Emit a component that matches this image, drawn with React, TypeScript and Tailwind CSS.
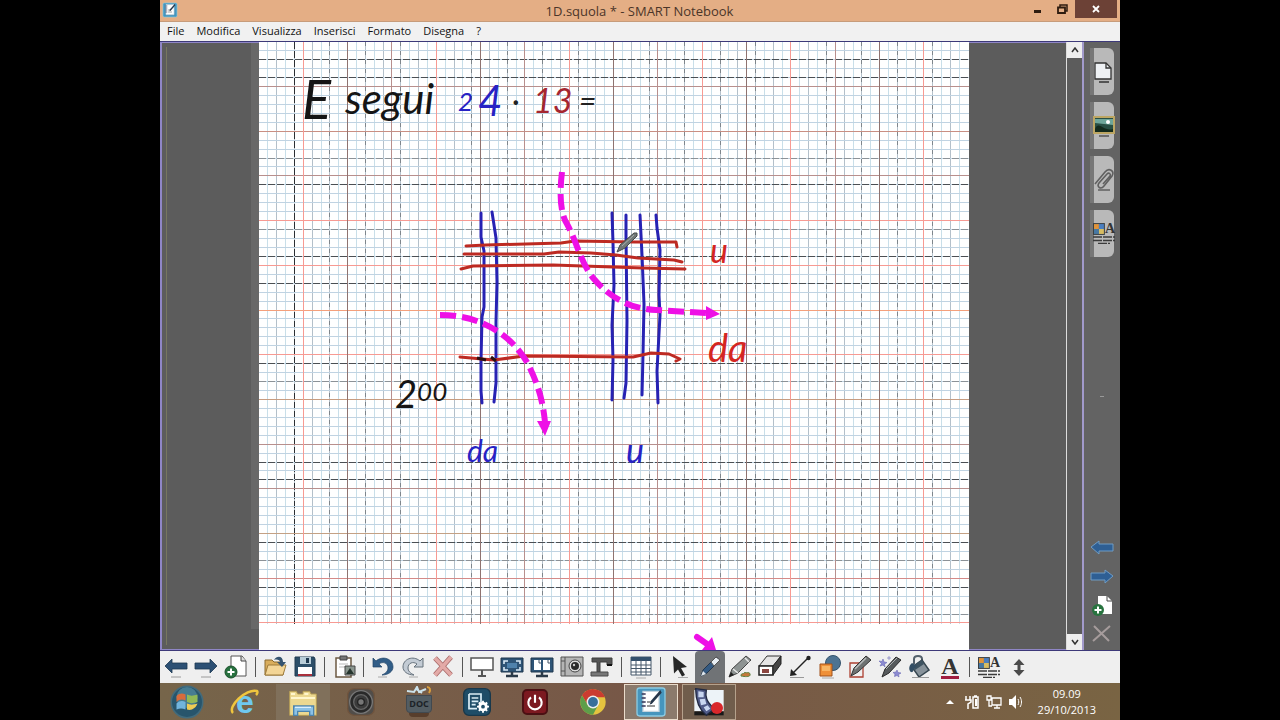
import React from 'react';

type IconProps = { className?: string };

const Svg: React.FC<{ size?: string; children: React.ReactNode }> = ({ size = 'size-6', children }) => (
  <svg viewBox="0 0 24 24" fill="none" className={size} aria-hidden="true">{children}</svg>
);

/* Toolbar icons */
const ArrowLeft = () => (
  <Svg>
    <path d="M1 11 8 4v4h15v6H8v4z" fill="#2c5074" stroke="#1d3852" strokeWidth=".8" />
    <path d="M7 22h10" stroke="#9a9a9a" />
  </Svg>
);
const ArrowRight = () => (
  <Svg>
    <path d="M23 11 16 4v4H1v6h15v4z" fill="#2c5074" stroke="#1d3852" strokeWidth=".8" />
    <path d="M7 22h10" stroke="#9a9a9a" />
  </Svg>
);
const PageAdd = () => (
  <Svg>
    <path d="M7 1h11l4 5v15H7z" fill="#fff" stroke="#555" />
    <path d="M17 1v5h5" fill="#ddd" stroke="#444" />
    <circle cx="7" cy="17" r="6" fill="#27713f" stroke="#195029" />
    <path d="M3.500 17h7M7 13.500v7" stroke="#fff" strokeWidth="2" />
  </Svg>
);
const FolderOpen = () => (
  <Svg>
    <path d="M2 20V5h7l2 2h9v13z" fill="#d9ad5c" stroke="#8b6a2e" />
    <path d="m2 20 3-10h18l-3 10z" fill="#f3d596" stroke="#9d7a3a" />
    <path d="M11 5c3-5 9-4 9 2h3l-4 5-5-5h3c0-2-3-3-6-2z" fill="#34536f" />
  </Svg>
);
const Save = () => (
  <Svg>
    <path d="M2 2h19l1 2v17H2z" fill="#2c4e68" stroke="#203a50" />
    <path d="M7 2h11v7H7z" fill="#b9cdd8" />
    <path d="M13 3h3v5h-3z" fill="#203a50" />
    <path d="M5 12h14v9H5z" fill="#fff" />
    <path d="M5 19h14v2H5z" fill="#a9303c" />
  </Svg>
);
const Paste = () => (
  <Svg>
    <path d="M4 3h15v19H4z" fill="#fff" stroke="#6c5a43" strokeWidth="1.500" />
    <path d="M8 1h7v4H8z" fill="#777" stroke="#444" />
    <path d="M7 9h9M7 12h9" stroke="#bbb" />
    <path d="M13 11h10v9H13z" fill="#8b968f" stroke="#444" />
    <path d="m14 19 4-6 4 6z" fill="#26352e" />
  </Svg>
);
const Undo = () => (
  <Svg>
    <path d="M2 3v9h9L8 9c4-3 9-1 9 4 0 3-2 5-6 7 7 0 11-4 11-8C22 4 12 0 5 6z" fill="#315d87" stroke="#1f4265" strokeWidth=".7" />
    <path d="M7 22h9" stroke="#aaa" />
  </Svg>
);
const Redo = () => (
  <Svg>
    <path d="M22 3v9h-9l3-3c-4-3-9-1-9 4 0 3 2 5 6 7-7 0-11-4-11-8C2 4 12 0 19 6z" fill="#c3cbd4" stroke="#64707b" />
    <path d="M8 22h9" stroke="#aaa" />
  </Svg>
);
const Delete = () => (
  <Svg>
    <path d="m4 3 16 17M20 2 4 20" stroke="#a96a69" strokeWidth="5" />
    <path d="m4 3 16 17M20 2 4 20" stroke="#e3aaa7" strokeWidth="3.400" />
  </Svg>
);
const Screen = () => (
  <Svg>
    <path d="M1 3h22v12H1z" fill="#fff" stroke="#555" strokeWidth="1.500" />
    <path d="M12 15v5m-4 1h8" stroke="#555" strokeWidth="2" />
  </Svg>
);
const FullScreen = () => (
  <Svg>
    <path d="M1 3h22v14H1z" fill="#2e5476" stroke="#1f364c" />
    <path d="M4 9V6h4M16 6h4v3M20 12v3h-4M8 15H4v-3" stroke="#dcebf7" strokeWidth="1.600" />
    <path d="M7 8h10v5H7z" fill="#4f82ac" />
    <path d="M12 17v3m-6 1h12" stroke="#2b3a48" strokeWidth="2.500" />
  </Svg>
);
const DualPage = () => (
  <Svg>
    <path d="M1 3h22v14H1z" fill="#2e5476" stroke="#1f364c" />
    <path d="M4 5h7v10H4zM13 5h7v10h-7z" fill="#fff" />
    <path d="M9 5v3h2M18 5v3h2" stroke="#456" />
    <path d="M12 17v3m-6 1h12" stroke="#2b3a48" strokeWidth="2.500" />
  </Svg>
);
const Camera = () => (
  <Svg>
    <path d="M1 2h22v19H1z" fill="#b5b5b5" stroke="#555" />
    <path d="M5 2v19M1 6h4M1 16h4" stroke="#555" />
    <circle cx="15" cy="11" r="6" fill="#ddd" stroke="#444" />
    <circle cx="15" cy="11" r="4" fill="#2b2b2b" />
    <circle cx="14" cy="10" r="1.200" fill="#ccc" />
  </Svg>
);
const DocCamera = () => (
  <Svg>
    <path d="M2 3h20v7h-5V7h-7v10H7V7H2z" fill="#555" stroke="#3e3e3e" />
    <path d="M1 17h17v4H1z" fill="#777" stroke="#4a4a4a" />
    <path d="M17 10h5" stroke="#111" strokeWidth="2" />
  </Svg>
);
const TableIcon = () => (
  <Svg>
    <path d="M2 2h20v18H2z" fill="#fff" stroke="#46586a" />
    <path d="M2 2h20v4H2z" fill="#34506c" />
    <path d="M2 10h20M2 13.500h20M2 17h20M7 5v15M12 5v15M17 5v15" stroke="#46586a" />
    <path d="M7 23h10" stroke="#aaa" />
  </Svg>
);
const Pointer = () => (
  <Svg>
    <path d="m5 1 14 11-6 1 4 7-3 1.500-4-7-4 4z" fill="#262626" />
    <path d="M10 22.500h10" stroke="#aaa" />
  </Svg>
);
const Pen = () => (
  <Svg>
    <path d="m3 21 2-6L18 2l4 3L9 18z" fill="#345a82" stroke="#26374a" />
    <path d="m13 7 5-5 4 3-6 6z" fill="#e8eef3" stroke="#555" />
    <path d="m3 21 2-5 3 3z" fill="#dfe6ec" />
  </Svg>
);
const CreativePen = () => (
  <Svg>
    <path d="m1 22 3-8L18 1l5 4L10 18z" fill="#8d9392" stroke="#444" />
    <path d="m5 14 5 4M17 3l4 4" stroke="#e8e8e8" strokeWidth="1.500" />
    <path d="m1 22 2-5 3 3z" fill="#222" />
    <path d="M13 21c0-4 3-1 4-4 1 2 4-1 5 2 1 3-4 3-9 2z" fill="#c4783a" stroke="#5d8240" />
  </Svg>
);
const Eraser = () => (
  <Svg>
    <path d="M1 11 9 1h14l-8 10z" fill="#e5e5e5" stroke="#333" />
    <path d="M1 11h14v9H1z" fill="#fff" stroke="#222" strokeWidth="1.500" />
    <path d="m15 11 8-10v8l-8 11z" fill="#454545" stroke="#222" />
    <path d="M4 14h7v4H4z" fill="#8b4540" />
  </Svg>
);
const LineIcon = () => (
  <Svg>
    <path d="M4 19 20 3" stroke="#222" strokeWidth="1.500" />
    <path d="m2 21 1-7 6 6z" fill="#222" />
    <circle cx="20.500" cy="3" r="2.200" fill="#222" />
    <path d="M2 22.500h14" stroke="#999" />
  </Svg>
);
const Shapes = () => (
  <Svg>
    <circle cx="15" cy="8" r="7.500" fill="#4d7392" stroke="#34536d" />
    <path d="M2 9h12v12H2z" fill="#ef9038" stroke="#a0501a" />
    <path d="M4 11h8v5H4z" fill="#f8b564" />
    <path d="M4 23h12" stroke="#aaa" />
  </Svg>
);
const ShapePen = () => (
  <Svg>
    <path d="M2 8h13v14H2z" stroke="#ad4032" strokeWidth="1.300" />
    <path d="m3 21 3-8L18 1l5 4L10 17z" fill="#6d7171" stroke="#343434" />
    <path d="m7 14 11-11" stroke="#b7bbbb" strokeWidth="1.500" />
  </Svg>
);
const MagicPen = () => (
  <Svg>
    <path d="m4 22 3-8L18 2l5 3L11 18z" fill="#565a5c" stroke="#2b2b2b" />
    <path d="m8 14 11-11" stroke="#adb0b2" />
    <path d="m5 4 1 3 3 .500-2.500 1.500.500 3-2-2-3 1 1.500-2.500L1 6l3 .500zM11 1v4M9 3h4M19 15l1 2.500 3 .500-2.500 1.500L21 22l-2-1.500-2.500 1 .500-2.500-2-1.500 3-.500z" fill="#8c8bd2" stroke="#6968b5" strokeWidth=".6" />
  </Svg>
);
const Fill = () => (
  <Svg>
    <path d="M6 9V4c0-4 8-4 8 0v5" stroke="#54616c" strokeWidth="2" />
    <path d="m4 12 10-7 7 10-10 7z" fill="#87929a" stroke="#364650" strokeWidth="1.500" />
    <path d="m5 11 9-6 2 4-9 6z" fill="#3e5361" />
    <path d="M4 8c-4 3-3 8-1 9 3 1 2-4 6-6z" fill="#334e64" />
    <path d="M4 22.500h17" stroke="#999" />
  </Svg>
);
const Sizer = () => (
  <Svg>
    <path d="M12 4 6.500 10h4v5h-4L12 21l5.500-6h-4v-5h4z" fill="#4b4b4b" />
  </Svg>
);

// Text style icons keep a real letter next to the drawn parts
const FontIcon = () => (
  <span className="flex w-[18px] flex-col items-center border-b-[3px] border-[#a01d40] font-['Liberation_Serif',serif] text-2xl leading-5 font-bold text-[#343434]">A</span>
);
const TextStyle = () => (
  <span className="flex w-[22px] flex-col">
    <span className="flex items-center font-['Liberation_Serif',serif] text-sm leading-3 font-bold text-[#333]">
      <svg viewBox="0 0 12 12" className="size-3" aria-hidden="true">
        <path d="M0 0h12v12H0z" fill="#3b4144" />
        <path d="M1 1h5v5H1z" fill="#df943c" />
        <path d="M6 1h5v5H6z" fill="#4b7fc0" />
        <path d="M1 6h5v5H1z" fill="#4778a3" />
        <path d="M6 6h5v5H6z" fill="#d8bd62" />
      </svg>
      A
    </span>
    <svg viewBox="0 0 22 9" className="h-[9px]" aria-hidden="true">
      <path d="M0 2h22M0 5.500h22M5 8.500h12" stroke="#3b3b3b" strokeWidth="1.500" strokeDasharray="9 1" />
    </svg>
  </span>
);

const Separator = () => <div className="mx-1 h-5 w-px shrink-0 bg-[#555]" />;

const tools: { label: string; icon: React.FC<IconProps>; active?: boolean; sep?: boolean }[] = [
  { label: 'Pagina precedente', icon: ArrowLeft },
  { label: 'Pagina successiva', icon: ArrowRight },
  { label: 'Aggiungi pagina', icon: PageAdd, sep: true },
  { label: 'Apri', icon: FolderOpen },
  { label: 'Salva', icon: Save, sep: true },
  { label: 'Incolla', icon: Paste, sep: true },
  { label: 'Annulla', icon: Undo },
  { label: 'Ripeti', icon: Redo },
  { label: 'Elimina', icon: Delete, sep: true },
  { label: 'Tendina', icon: Screen },
  { label: 'Schermo intero', icon: FullScreen },
  { label: 'Doppia pagina', icon: DualPage },
  { label: 'Cattura', icon: Camera },
  { label: 'Document camera', icon: DocCamera, sep: true },
  { label: 'Tabella', icon: TableIcon, sep: true },
  { label: 'Seleziona', icon: Pointer },
  { label: 'Penna', icon: Pen, active: true },
  { label: 'Penna creativa', icon: CreativePen },
  { label: 'Gomma', icon: Eraser },
  { label: 'Linea', icon: LineIcon },
  { label: 'Forme', icon: Shapes },
  { label: 'Penna forme', icon: ShapePen },
  { label: 'Penna magica', icon: MagicPen },
  { label: 'Riempi', icon: Fill },
  { label: 'Testo', icon: FontIcon, sep: true },
  { label: 'Proprietà', icon: TextStyle },
  { label: 'Sposta barra', icon: Sizer },
];

const Toolbar: React.FC = () => (
  <div className="flex h-8 shrink-0 items-center bg-[#efefef] pl-px">
    {tools.map(({ label, icon: Icon, active, sep }) => (
      <React.Fragment key={label}>
        <button aria-label={label} className={`flex h-8 w-[30px] shrink-0 items-center justify-center ${active ? 'rounded-t bg-[#707376]' : ''}`}>
          <Icon />
        </button>
        {sep && <Separator />}
      </React.Fragment>
    ))}
  </div>
);

/* Taskbar icons */
const Start = () => (
  <Svg size="size-9">
    <circle cx="12" cy="12" r="10.500" fill="#28556c" stroke="#426b7c" />
    <circle cx="12" cy="9" r="7" fill="#477c91" />
    <path d="M5 8c2-2 4-2 6-1v4c-2-1-4-1-6 1z" fill="#d96b3c" />
    <path d="M12 7c2 1 4 1 7 0v5c-3 1-5 1-7 0z" fill="#91b956" />
    <path d="M5 13c2-2 4-2 6-1v5c-2-1-4-1-6 0z" fill="#71b4dd" />
    <path d="M12 13c2 1 4 1 7 0-1 3-4 5-7 4z" fill="#eecb54" />
  </Svg>
);
const Explorer = () => (
  <span className="relative flex size-8 items-center justify-center font-['Liberation_Sans',sans-serif] text-[32px] leading-8 font-bold text-[#6fc8ef]">
    e
    <svg viewBox="0 0 32 32" className="absolute inset-0 size-8" fill="none" aria-hidden="true">
      <path d="M4 27C-2 21 17 2 28 5c1 1 0 3-1 4" stroke="#f0c63e" strokeWidth="2.500" />
    </svg>
  </span>
);
const Folders = () => (
  <Svg size="size-8">
    <path d="M2 22V4h5l1 2h4V4h5l1 2h4v16z" fill="#ecd890" stroke="#b59c52" strokeWidth=".7" />
    <path d="M3 9h18M3 6h3M13 6h3" stroke="#fff6cc" strokeWidth="1.500" />
    <path d="M5 22v-7h15v7h-3v-3H8v3z" fill="#8cc2e6" stroke="#4b83ad" />
    <path d="M6 16h12" stroke="#d9efff" />
  </Svg>
);
const Speaker = () => (
  <Svg size="size-8">
    <rect x="2" y="2" width="20" height="20" rx="5" fill="#514d49" stroke="#70543d" />
    <circle cx="12" cy="12" r="8.500" fill="#292929" stroke="#777" />
    <circle cx="12" cy="12" r="5.500" fill="#3b3b3b" stroke="#666" />
    <circle cx="12" cy="12" r="2.500" fill="#777" stroke="#222" />
  </Svg>
);
const DocSign = () => (
  <span className="flex w-7 flex-col items-center">
    <svg viewBox="0 0 28 9" className="h-[9px] w-7" fill="none" aria-hidden="true">
      <path d="m2 5 7 1 3-5 2 5 7-3M11 3l6 4" stroke="#cce3ec" strokeWidth="2" />
      <path d="M22 1c3 0 4 3 2 6" stroke="#d99f3e" strokeWidth="2" />
    </svg>
    <span className="w-[26px] rounded-b border border-[#414950] bg-[#535d63] text-center text-[9px] leading-4 font-bold text-[#1c2227]">DOC</span>
    <span className="h-1 w-5 rounded-b bg-[#583e2c]" />
  </span>
);
const Settings = () => (
  <Svg size="size-8">
    <rect x="2" y="2" width="20" height="20" rx="4" fill="#1f4d67" stroke="#18384b" />
    <path d="M6 6h9v8M6 6v11h6M8 9h5M8 11.500h5M8 14h3" stroke="#d9edf5" strokeWidth="1.300" />
    <circle cx="16.500" cy="15.500" r="3.500" fill="#fff" />
    <path d="M16.500 11v9M12 15.500h9M13.400 12.400l6.200 6.200M19.600 12.400l-6.200 6.200" stroke="#fff" strokeWidth="1.400" />
    <circle cx="16.500" cy="15.500" r="1.400" fill="#1f4d67" />
  </Svg>
);
const Power = () => (
  <Svg size="size-8">
    <rect x="3" y="3" width="18" height="18" rx="3" fill="#7c1920" stroke="#4b1013" strokeWidth="1.500" />
    <path d="M9 8.500a5 5 0 1 0 6 0M12 6.500v6" stroke="#fff" strokeWidth="1.600" />
  </Svg>
);
const Chrome = () => (
  <Svg size="size-8">
    <circle cx="12" cy="12" r="9.500" fill="#e4c33f" />
    <path d="M3.800 7.200A9.500 9.500 0 0 1 21 8.500h-9L8 14z" fill="#cb3c30" />
    <path d="M3.800 7.200A9.500 9.500 0 0 0 12 21.500l4-7.500H8z" fill="#5e9e4a" />
    <circle cx="12" cy="12" r="4.800" fill="#eee" />
    <circle cx="12" cy="12" r="3.700" fill="#386e9a" />
  </Svg>
);
const Notebook = ({ size = 'size-8' }: { size?: string }) => (
  <Svg size={size}>
    <rect x="1.500" y="1.500" width="21" height="21" rx="2" fill="#4695bd" stroke="#8acbe3" />
    <path d="M6 4h12v15H6z" fill="#fff" stroke="#c5d5df" />
    <path d="M5 6h3M5 9h3M5 12h3M5 15h3" stroke="#335" />
    <path d="m11 14 1-3 7-8 1 2-7 8z" fill="#26364a" />
    <path d="M9 12h3M9 15h6" stroke="#777" />
  </Svg>
);
const Recorder = () => (
  <Svg size="size-8">
    <path d="M1 3h22v16H1z" fill="#edf3f8" />
    <path d="M1 19h22v3H1z" fill="#191919" />
    <path d="m2 2 8 1c-1 5 0 9 6 14l-6 5C4 17 2 10 2 2z" fill="#505b88" stroke="#222a42" />
    <path d="m4 4 4 .500v4H4zM5 10l4-.500 1 4-4 1zM8 16l3-1.500 2 2.500-3 2z" fill="#c8d6f0" />
    <circle cx="18" cy="16.500" r="4.500" fill="#d9272b" />
  </Svg>
);

const apps: { label: string; icon: React.FC; look: string }[] = [
  { label: 'Start', icon: Start, look: '' },
  { label: 'Internet Explorer', icon: Explorer, look: '' },
  { label: 'Esplora file', icon: Folders, look: 'bg-[#80705b]' },
  { label: 'Audio', icon: Speaker, look: '' },
  { label: 'Documenti', icon: DocSign, look: '' },
  { label: 'Impostazioni', icon: Settings, look: '' },
  { label: 'Arresta', icon: Power, look: '' },
  { label: 'Chrome', icon: Chrome, look: '' },
  { label: 'SMART Notebook', icon: Notebook, look: 'border border-[#eadccb] bg-[#8b7a6c]' },
  { label: 'SMART Recorder', icon: Recorder, look: 'border border-[#b5a18c] bg-[#705d4c]' },
];

const Taskbar: React.FC = () => (
  <div className="flex h-[37px] shrink-0 items-center gap-1 bg-linear-to-r from-[#76654a] via-[#775747] to-[#796443] pr-6">
    {apps.map(({ label, icon: Icon, look }) => (
      <button key={label} aria-label={label} className={`flex h-9 w-[54px] shrink-0 items-center justify-center ${look}`}>
        <Icon />
      </button>
    ))}
    <div className="ml-auto flex items-center gap-[6px] text-white">
      <button aria-label="Mostra icone nascoste">
        <svg viewBox="0 0 8 8" className="size-2" aria-hidden="true"><path d="m4 2 4 4H0z" fill="#fff" /></svg>
      </button>
      <svg viewBox="0 0 16 16" className="ml-1 size-4" fill="none" stroke="#fff" aria-hidden="true">
        <path d="M2 2v4M6 2v4M1 6h6v2L4 10v5M9 3h5v11H9zM10 2h3" strokeWidth="1.500" />
        <path d="M11 5h2v7h-2z" fill="#fff" stroke="none" />
      </svg>
      <svg viewBox="0 0 16 16" className="size-4" fill="none" stroke="#fff" aria-hidden="true">
        <path d="M6 4h9v7H6zM8 14h6M11 11v3M1 2h4v4H1zM3 6v6h3" strokeWidth="1.300" />
      </svg>
      <svg viewBox="0 0 16 16" className="size-4" fill="none" stroke="#fff" aria-hidden="true">
        <path d="M1 5h3l4-4v14l-4-4H1z" fill="#fff" stroke="none" />
        <path d="M10 5c1 2 1 4 0 6M12 3c2 3 2 7 0 10" />
      </svg>
      <div className="ml-2 text-center text-[11px] leading-4">
        <p>09.09</p>
        <p>29/10/2013</p>
      </div>
    </div>
  </div>
);

const TitleBar: React.FC = () => (
  <div className="flex h-[22px] shrink-0 items-start border-b border-[#c79c7b] bg-[#e4ae85]">
    <div className="flex flex-1 pt-[2px] pl-[2px]"><Notebook size="size-4" /></div>
    <h1 className="text-[13px] leading-[22px] font-medium text-[#4b3528]">1D.squola * - SMART Notebook</h1>
    <div className="flex flex-1 justify-end pr-[3px]">
      <button aria-label="Riduci a icona" className="flex h-[18px] w-[25px] items-center justify-center">
        <span className="mt-1 h-[3px] w-[7px] bg-[#2e1c10]" />
      </button>
      <button aria-label="Ripristina" className="flex h-[18px] w-[25px] items-center justify-center">
        <svg viewBox="0 0 11 10" className="h-[10px] w-[11px]" fill="none" stroke="#2e1c10" aria-hidden="true">
          <path d="M3 3V1h7v6H8" strokeWidth="1.500" />
          <path d="M1 3.500h7V9H1z" strokeWidth="1.800" />
        </svg>
      </button>
      <button aria-label="Chiudi" className="flex h-[18px] w-[42px] items-center justify-center bg-[#6c4136]">
        <svg viewBox="0 0 8 8" className="size-2" aria-hidden="true"><path d="m1 1 6 6M7 1 1 7" stroke="#fff" strokeWidth="1.800" /></svg>
      </button>
    </div>
  </div>
);

const MenuBar: React.FC = () => (
  <nav className="flex h-[19px] shrink-0 items-center gap-3 bg-[#f1f1f1] pl-[7px] text-[11px] text-[#111]">
    {['File', 'Modifica', 'Visualizza', 'Inserisci', 'Formato', 'Disegna', '?'].map((item) => (
      <button key={item}>{item}</button>
    ))}
  </nav>
);

// Squared paper: every fifth line is a main line
const STEP_X = 8.867;
const STEP_Y = 8.942;
const columns = Array.from({ length: 80 }, (_, i) => ({ i, at: 267.800 + i * STEP_X })).filter((c) => c.at < 968);
const rows = Array.from({ length: 65 }, (_, i) => ({ i, at: 50.700 + i * STEP_Y })).filter((r) => r.at < 624);

const RED = '#f79a93';
const BROWN = '#8f7370';
const ROSE = '#b88f8d';
const mainColumns = [RED, BROWN, ROSE, RED, BROWN, ROSE, RED, BROWN, ROSE, RED, BROWN, RED, ROSE, BROWN, RED];
const mainRows = [ROSE, '#c98f83', ROSE, RED, RED, '#f4a07c', RED, '#c79c80', ROSE, ROSE, '#c4a184', '#d48a88', RED];
const darkRows = [1, 3, 15, 23, 26, 35, 46, 48, 55, 60];
const greyRows = [12, 20, 37, 57, 63];

const Grid: React.FC = () => (
  <g shapeRendering="crispEdges">
    {columns.map(({ i, at }) =>
      i % 5 === 4 ? null : (
        <g key={i}>
          <path d={`M${at} 42V624`} stroke={i % 2 === 1 ? '#b4c0ca' : '#c9dfe9'} />
          {i % 4 === 3 && <path d={`M${at} 42V624`} stroke={i === 3 ? '#2c2f33' : '#7f868c'} strokeDasharray={i === 3 ? '7 2' : '4 5'} />}
        </g>
      ),
    )}
    {rows.map(({ i, at }) =>
      i % 5 === 4 ? null : (
        <g key={i}>
          <path d={`M259 ${at}H969`} stroke="#c0d3e2" />
          {darkRows.includes(i) && <path d={`M259 ${at}H969`} stroke="#4b4f53" strokeDasharray="7 2" />}
          {greyRows.includes(i) && <path d={`M259 ${at}H969`} stroke="#8c9297" strokeDasharray="7 2" />}
        </g>
      ),
    )}
    {rows.filter(({ i }) => i % 5 === 4).map(({ i, at }) => (
      <path key={i} d={`M259 ${at}H969`} stroke={mainRows[(i - 4) / 5]} />
    ))}
    {columns.filter(({ i }) => i % 5 === 4).map(({ i, at }) => (
      <path key={i} d={`M${at} 42V624`} stroke={mainColumns[(i - 4) / 5]} />
    ))}
  </g>
);

const Page: React.FC = () => (
  <svg viewBox="259 42 710 608" preserveAspectRatio="xMidYMin meet" className="h-full w-auto shrink-0 bg-white" fill="none" strokeLinecap="butt">
    <Grid />

    <g stroke="#2722b3" strokeWidth="3" strokeLinecap="round" strokeLinejoin="round">
      <path d="M481 213v24l3 14v56l-2 10-1 44v30l1 12" />
      <path d="M492 212l4 26 1 44-1 40v61l-2 19" />
      <path d="M612 213l1 30 1 42-2 40 1 35-1 40" />
      <path d="M626 215v20l1 86-1 62-2 15" />
      <path d="M640 215l2 40 2 49-1 50-1 41" />
      <path d="M656 215l1 13 3 22-1 45 1 20-3 56 1 32" />
    </g>

    <g stroke="#bd2a22" strokeWidth="3" strokeLinecap="round" strokeLinejoin="round">
      <path d="M466 246l20-1 75-2 14-2 60 1 41 0 1 5" />
      <path d="M464 254l80 0 15-2 32 1 25 2 22 3 36 2 8 2" />
      <path d="M461 269l12-3 80-1 60 2 30 1 42 1" />
      <path d="M460 357l22 2 12 1 30-4 109 1 18-4 18 1 11 5-4 2" />
    </g>
    <path d="M477 358l9 2M491 357l5 4" stroke="#2b1111" strokeWidth="3" />

    <g stroke="#ee10e6" strokeWidth="6">
      <path d="M562 172C560 188 559 211 567 224C577 242 581 264 594 279C611 299 632 309 656 310L706 313" strokeDasharray="16 6" />
      <path d="M440 315C490 315 517 344 528 364C540 388 543 404 545 422" strokeDasharray="16 6" />
      <path d="M697 637l10 7" strokeLinecap="round" />
    </g>
    <path d="M706 306l14 8-14 6zM537 421h14l-6 15zM712 637l4 13h-14z" fill="#ee10e6" />

    <g fontFamily="Lato, sans-serif" fontStyle="italic">
      <text x="302" y="119" fontSize="54" fill="#151515">E</text>
      <text x="345" y="114" fontSize="42" fill="#151515">segui</text>
      <text x="458" y="111" fontSize="26" fill="#2722c4">2</text>
      <text x="478" y="116" fontSize="42" fill="#2722c4">4</text>
      <text x="512" y="112" fontSize="30" fill="#222">·</text>
      <text x="533" y="113" fontSize="34" fill="#a52630">13</text>
      <text x="579" y="112" fontSize="30" fill="#222">=</text>
      <text x="395" y="408" fontSize="38" fill="#151515">2<tspan fontSize="26" dy="-7">00</tspan></text>
      <text x="710" y="263" fontSize="34" fill="#d42622">u</text>
      <text x="708" y="362" fontSize="38" fill="#d42622">da</text>
      <text x="467" y="462" fontSize="30" fill="#2722c4">da</text>
      <text x="626" y="463" fontSize="34" fill="#2722c4">u</text>
    </g>

    {/* pen cursor */}
    <path d="M617 252l3-7 14-12h3v3l-12 12z" fill="#707776" stroke="#464b4b" />
    <path d="M622 246l12-11" stroke="#a7adac" />
  </svg>
);

const sideTab = 'flex h-[47px] w-6 items-center justify-center rounded-r-md border-l-4 border-[#777] bg-[#b9b9b9]';

function SideArrow({ d }: { d: string }) {
  return (
    <svg viewBox="0 0 24 24" className="size-6" aria-hidden="true"><path d={d} fill="#2e5f94" stroke="#6f9cc4" transform="translate(0 3)" /></svg>
  );
}

const Sidebar: React.FC = () => (
  <aside className="flex w-9 shrink-0 flex-col items-center bg-[#636363] pt-[6px] pb-1">
    <div className="flex flex-col gap-[7px]">
      <button aria-label="Ordina pagine" className={sideTab}>
        <svg viewBox="0 0 20 22" className="h-[22px] w-5 shrink-0" fill="none" aria-hidden="true">
          <path d="M1 2h11l5 5v11H1z" fill="#eef1f4" stroke="#333" strokeWidth="1.300" />
          <path d="M12 2v5h5M5 21h10" stroke="#333" strokeWidth="1.300" />
        </svg>
      </button>
      <button aria-label="Galleria" className={sideTab}>
        <svg viewBox="0 0 22 22" className="size-[22px] shrink-0" fill="none" aria-hidden="true">
          <path d="M1 2h20v16H1z" fill="#294f44" stroke="#bda663" strokeWidth="2" />
          <path d="M2 4h18v6L2 8z" fill="#6fa69a" />
          <path d="M2 14c4-9 8 3 18 0v3H2z" fill="#132a1c" />
          <circle cx="15" cy="7" r="2" fill="#fff" />
          <path d="M6 21h10" stroke="#444" strokeWidth="1.300" />
        </svg>
      </button>
      <button aria-label="Allegati" className={sideTab}>
        <svg viewBox="0 0 22 24" className="h-6 w-[22px] shrink-0" fill="none" stroke="#606060" strokeWidth="1.600" aria-hidden="true">
          <path d="M2 16 12 4c4-5 10-1 7 4l-8 10c-3 4-8 1-5-3l8-9c2-2 4 0 3 2l-7 8M5 22h12" />
        </svg>
      </button>
      <button aria-label="Proprietà pagina" className={sideTab}><TextStyle /></button>
    </div>
    <div className="m-auto h-px w-1 bg-[#999]" />
    <div className="flex flex-col items-center gap-[5px]">
      <button aria-label="Indietro"><SideArrow d="M1 9 9 3v3h14v7H9v3z" /></button>
      <button aria-label="Avanti"><SideArrow d="M23 9 15 3v3H1v7h14v3z" /></button>
      <button aria-label="Nuova pagina">
        <svg viewBox="0 0 24 24" className="size-6" fill="none" aria-hidden="true">
          <path d="M8 3h9l5 5v13H8z" fill="#fff" />
          <path d="M17 3v5h5" stroke="#444" />
          <circle cx="8" cy="17" r="6" fill="#28733f" />
          <path d="M4.500 17h7M8 13.500v7" stroke="#fff" strokeWidth="2" />
        </svg>
      </button>
      <button aria-label="Elimina pagina">
        <svg viewBox="0 0 24 24" className="size-6" aria-hidden="true"><path d="m4 4 15 15M20 4 3 19" stroke="#a69c9c" strokeWidth="2" /></svg>
      </button>
    </div>
  </aside>
);

const App: React.FC = () => {
  return (
    <div className="flex h-screen justify-center bg-black font-['Open_Sans',sans-serif]">
      <div className="flex aspect-4/3 h-full flex-col overflow-hidden">
        <TitleBar />
        <MenuBar />
        <main className="flex min-h-0 flex-1 border-y border-[#3d3979] bg-[#5c5c5c]">
          <div className="flex min-w-0 flex-1 border-y border-l-2 border-[#8f86c6]">
            <div className="my-1 ml-1 w-px bg-[#77775f]" />
            <div className="mb-5 ml-auto w-2 bg-[#686868]" />
          </div>
          <Page />
          <div className="w-[97px] border-y border-[#8f86c6]" />
          <div className="flex w-[18px] shrink-0 flex-col justify-between border-r-2 border-l border-r-[#a29acb] border-l-[#ddd]">
            <button aria-label="Scorri su" className="flex h-4 items-center justify-center bg-[#eee]">
              <svg viewBox="0 0 8 6" className="h-[6px] w-2" fill="none" aria-hidden="true"><path d="m1 5 3-4 3 4" stroke="#333" strokeWidth="1.500" /></svg>
            </button>
            <button aria-label="Scorri giù" className="flex h-4 items-center justify-center bg-[#eee]">
              <svg viewBox="0 0 8 6" className="h-[6px] w-2" fill="none" aria-hidden="true"><path d="m1 1 3 4 3-4" stroke="#333" strokeWidth="1.500" /></svg>
            </button>
          </div>
          <Sidebar />
        </main>
        <Toolbar />
        <Taskbar />
      </div>
    </div>
  );
};

export default App;
